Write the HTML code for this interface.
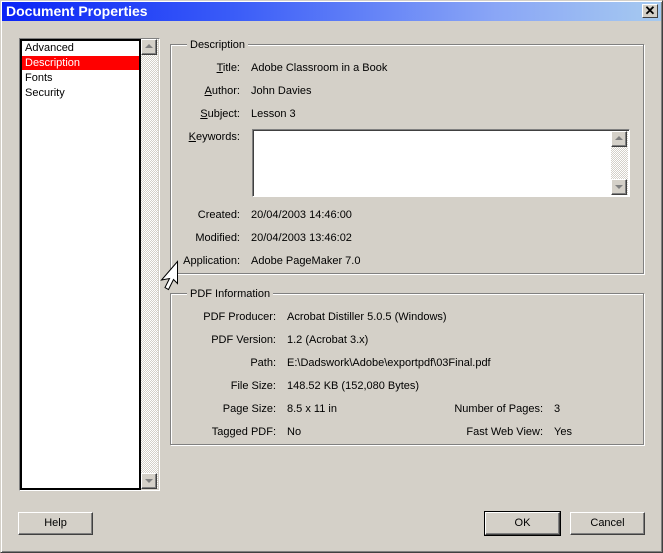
<!DOCTYPE html>
<html><head><meta charset="utf-8"><style>
*{margin:0;padding:0;box-sizing:border-box}
body{width:663px;height:553px;background:#d4d0c8;font-family:"Liberation Sans",Tahoma,sans-serif;font-size:11px;color:#000;position:relative;overflow:hidden}
.a{position:absolute;white-space:nowrap}
.frame{position:absolute;left:0;top:0;width:663px;height:553px;border:1px solid;border-color:#d4d0c8 #404040 #404040 #d4d0c8;box-shadow:inset 1px 1px #fff,inset -1px -1px #808080}
.title{position:absolute;left:2px;top:2px;width:659px;height:19px;background:linear-gradient(90deg,#0a24f6 0%,#3a5cf8 35%,#8aa6f6 75%,#a6caf0 100%);color:#fff;font-weight:bold;font-size:14px;padding:1px 0 0 4px}
.close{position:absolute;left:642px;top:4px;width:16px;height:14px;background:#d4d0c8;border:1px solid;border-color:#fff #404040 #404040 #fff;font-size:13px;font-weight:bold;line-height:11px;text-align:center;color:#000}
.grp{position:absolute;border:1px solid #808080;box-shadow:1px 1px #fff,inset 1px 1px #fff}
.gl{position:absolute;background:#d4d0c8;padding:0 3px;font-size:11px}
.lbl{position:absolute;text-align:right;white-space:nowrap}
.btn{position:absolute;height:23px;border:1px solid;border-color:#fff #404040 #404040 #fff;box-shadow:inset -1px -1px #808080;text-align:center;line-height:20px;background:#d4d0c8}
.chk{background-color:#eeeeea;background-image:repeating-conic-gradient(#d4d0c8 0 25%,#fff 0 50%);background-size:2px 2px}
.sb{position:absolute;width:16px;height:16px;background:#d4d0c8;border:1px solid;border-color:#fff #404040 #404040 #fff;box-shadow:inset -1px -1px #808080}
u{text-decoration:underline}
</style></head><body>
<div class="frame"></div>
<div class="title">Document Properties</div>
<div class="close">✕</div>

<div class="a" style="left:19px;top:38px;width:141px;height:453px;border:1px solid;border-color:#808080 #fff #fff #808080"></div>
<div class="a" style="left:20px;top:39px;width:121px;height:451px;background:#fff;border:2px solid #000"></div>
<div class="a chk" style="left:141px;top:39px;width:17px;height:450px"></div>
<div class="sb" style="left:141px;top:39px"><div style="position:absolute;left:3px;top:4px;width:0;height:0;border-left:4px solid transparent;border-right:4px solid transparent;border-bottom:4px solid #808080"></div></div>
<div class="sb" style="left:141px;top:473px"><div style="position:absolute;left:3px;top:5px;width:0;height:0;border-left:4px solid transparent;border-right:4px solid transparent;border-top:4px solid #808080"></div></div>
<div class="a" style="left:22px;top:56px;width:117px;height:14px;background:#ff0000"></div>
<div class="a" style="left:25px;top:42px">Advanced</div>
<div class="a" style="left:25px;top:57px;color:#fff">Description</div>
<div class="a" style="left:25px;top:72px">Fonts</div>
<div class="a" style="left:25px;top:87px">Security</div>

<div class="grp" style="left:170px;top:44px;width:474px;height:230px"></div>
<div class="gl" style="left:187px;top:39px">Description</div>
<div class="lbl" style="left:140px;width:100px;top:62px"><u>T</u>itle:</div>
<div class="a" style="left:251px;top:62px">Adobe Classroom in a Book</div>
<div class="lbl" style="left:140px;width:100px;top:85px"><u>A</u>uthor:</div>
<div class="a" style="left:251px;top:85px">John Davies</div>
<div class="lbl" style="left:140px;width:100px;top:108px"><u>S</u>ubject:</div>
<div class="a" style="left:251px;top:108px">Lesson 3</div>
<div class="lbl" style="left:140px;width:100px;top:131px"><u>K</u>eywords:</div>
<div class="a" style="left:252px;top:129px;width:378px;height:68px;background:#fff;border:1px solid;border-color:#808080 #fff #fff #808080;box-shadow:inset 1px 1px #404040"></div>
<div class="a chk" style="left:611px;top:131px;width:17px;height:64px"></div>
<div class="sb" style="left:611px;top:131px"><div style="position:absolute;left:3px;top:4px;border-left:4px solid transparent;border-right:4px solid transparent;border-bottom:4px solid #808080"></div></div>
<div class="sb" style="left:611px;top:179px"><div style="position:absolute;left:3px;top:5px;border-left:4px solid transparent;border-right:4px solid transparent;border-top:4px solid #808080"></div></div>
<div class="lbl" style="left:140px;width:100px;top:209px">Created:</div>
<div class="a" style="left:251px;top:209px">20/04/2003 14:46:00</div>
<div class="lbl" style="left:140px;width:100px;top:232px">Modified:</div>
<div class="a" style="left:251px;top:232px">20/04/2003 13:46:02</div>
<div class="lbl" style="left:140px;width:100px;top:255px">Application:</div>
<div class="a" style="left:251px;top:255px">Adobe PageMaker 7.0</div>

<div class="grp" style="left:170px;top:293px;width:474px;height:152px"></div>
<div class="gl" style="left:187px;top:288px">PDF Information</div>
<div class="lbl" style="left:176px;width:100px;top:311px">PDF Producer:</div>
<div class="a" style="left:287px;top:311px">Acrobat Distiller 5.0.5 (Windows)</div>
<div class="lbl" style="left:176px;width:100px;top:334px">PDF Version:</div>
<div class="a" style="left:287px;top:334px">1.2 (Acrobat 3.x)</div>
<div class="lbl" style="left:176px;width:100px;top:357px">Path:</div>
<div class="a" style="left:287px;top:357px">E:\Dadswork\Adobe\exportpdf\03Final.pdf</div>
<div class="lbl" style="left:176px;width:100px;top:380px">File Size:</div>
<div class="a" style="left:287px;top:380px">148.52 KB (152,080 Bytes)</div>
<div class="lbl" style="left:176px;width:100px;top:403px">Page Size:</div>
<div class="a" style="left:287px;top:403px">8.5 x 11 in</div>
<div class="lbl" style="left:176px;width:100px;top:426px">Tagged PDF:</div>
<div class="a" style="left:287px;top:426px">No</div>
<div class="lbl" style="left:423px;width:120px;top:403px">Number of Pages:</div>
<div class="a" style="left:554px;top:403px">3</div>
<div class="lbl" style="left:423px;width:120px;top:426px">Fast Web View:</div>
<div class="a" style="left:554px;top:426px">Yes</div>

<svg class="a" style="left:0;top:0" width="200" height="300"><path d="M177.5 261.5 L177.5 283.5 L173.5 279.5 L168.5 289.5 L165 287.5 L169.5 278.5 L161.5 280 Z" fill="#fff" stroke="#000" stroke-width="1"/></svg>

<div class="btn" style="left:18px;top:512px;width:75px">Help</div>
<div class="a" style="left:484px;top:511px;width:77px;height:25px;border:1px solid #000"></div>
<div class="btn" style="left:485px;top:512px;width:75px">OK</div>
<div class="btn" style="left:570px;top:512px;width:75px">Cancel</div>
</body></html>
